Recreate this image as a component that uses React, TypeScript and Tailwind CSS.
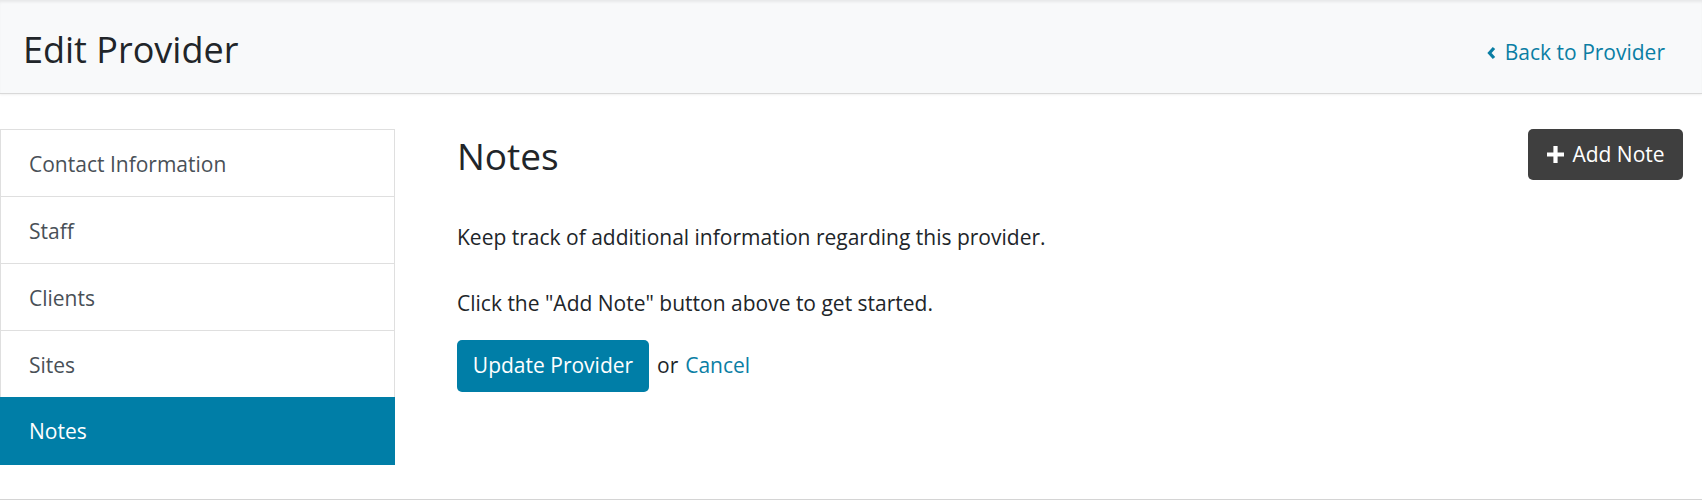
import React from "react";

const navItems = ["Contact Information", "Staff", "Clients", "Sites", "Notes"];

export default function App() {
	const [active] = React.useState("Notes");

	return (
		<div className="w-[1702px] bg-white text-[#212529]" style={{ fontFamily: '"Open Sans", "Noto Sans", sans-serif' }}>
			<div className="h-[94px] flex items-center justify-between pl-[23px] pr-[37px] bg-[#f8f9fa] border-b border-[#d9d9d9] shadow-[inset_0_3px_3px_-1px_rgba(0,0,0,0.07),0_1px_2px_rgba(0,0,0,0.06)]">
				<h1 className="text-[36px] font-normal leading-none pt-[7px]">Edit Provider</h1>
				<a href="#" className="flex items-center gap-[9px] text-[21px] text-[#0a7ea4] pt-[12px]">
					<svg width="9" height="14" viewBox="0 0 9 14" className="mt-[1px]">
						<path d="M7 2 L2.5 7 L7 12" fill="none" stroke="currentColor" strokeWidth="3.2" />
					</svg>
					Back to Provider
				</a>
			</div>

			<div className="flex h-[406px] pt-[35px] border-b border-[#d4d4d4]">
				<ul className="w-[395px] flex-none self-start">
					{navItems.map((item) =>
						item === active ? (
							<li key={item} className="h-[68px] flex items-center pl-[29px] pt-[2px] bg-[#007ea7] text-white text-[21px]">
								{item}
							</li>
						) : (
							<li key={item} className="h-[67px] flex items-center pl-[28px] pt-[3px] border border-b-0 border-[#dfdfdf] text-[#495057] text-[21px]">
								{item}
							</li>
						)
					)}
				</ul>

				<div className="flex-1 pl-[62px] pr-[19px]">
					<div className="flex justify-between items-start">
						<h2 className="text-[37px] font-normal leading-none mt-[8px]">Notes</h2>
						<button type="button" className="h-[51px] w-[155px] flex items-center justify-center gap-[7px] bg-[#3f3f3f] text-white text-[21px] rounded-[5px]">
							<svg width="19" height="19" viewBox="0 0 19 19">
								<path d="M9.5 1 V18 M1 9.5 H18" stroke="currentColor" strokeWidth="4.2" />
							</svg>
							Add Note
						</button>
					</div>
					<p className="text-[21px] leading-[31.5px] mt-[42px]">Keep track of additional information regarding this provider.</p>
					<p className="text-[21px] leading-[31.5px] mt-[34px]">Click the "Add Note" button above to get started.</p>
					<div className="flex items-center gap-[8px] mt-[21px] text-[21px]">
						<button type="button" className="h-[52px] w-[192px] bg-[#007ea7] text-white text-[21px] rounded-[5px]">Update Provider</button>
						<span>or</span>
						<a href="#" className="text-[#0a7ea4] -ml-[1px]">Cancel</a>
					</div>
				</div>
			</div>
		</div>
	);
}
